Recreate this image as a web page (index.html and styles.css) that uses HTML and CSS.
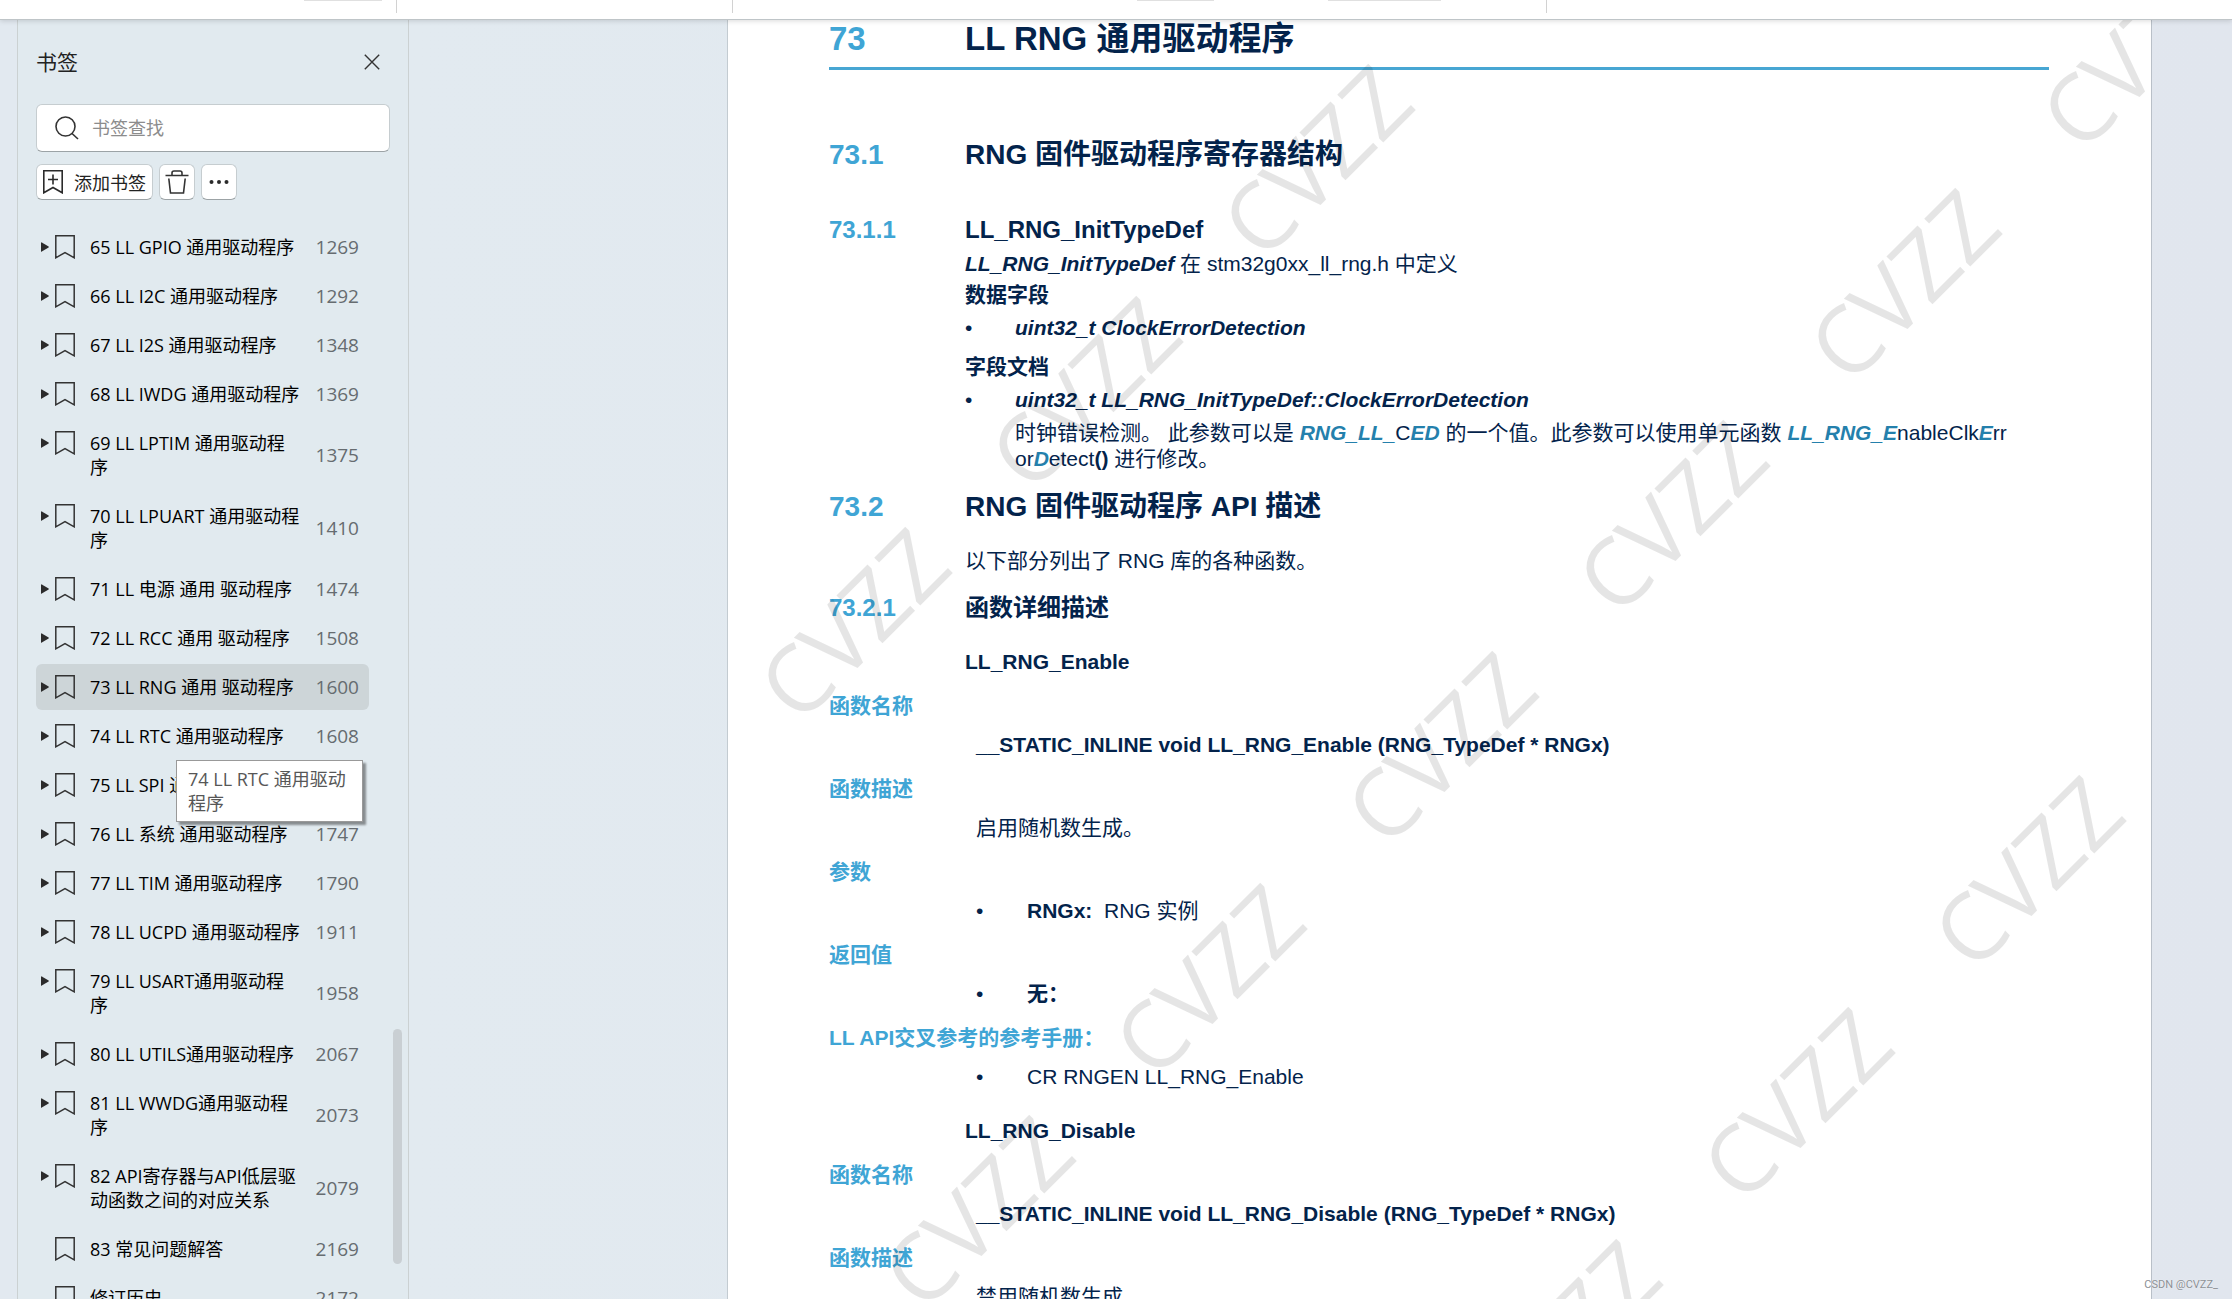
FILE: index.html
```
<!DOCTYPE html>
<html lang="zh-CN">
<head>
    <meta charset="UTF-8">
    <meta name="viewport" content="width=device-width, initial-scale=1.0">
    <title>LL RNG 通用驱动程序</title>
    <link rel="stylesheet" href="styles.css">
</head>
<body>
    <svg class="sprite" aria-hidden="true">
        <symbol id="arrow" viewBox="0 0 8 10"><path d="M0 0.5Q0 0 .8 .4L7.6 4.5Q8 5 7.6 5.5L.8 9.6Q0 10 0 9.5z" fill="#2b2b2b"/></symbol>
        <symbol id="mark" viewBox="0 0 20 24"><path d="M.8.8h18.4v22L10 17.5.8 22.8z" fill="none" stroke="#333" stroke-width="1.5"/></symbol>
    </svg>

    <div class="toolbar">
        <span class="stub stub-a"></span>
        <span class="divider divider-a"></span>
        <span class="divider divider-b"></span>
        <span class="stub stub-b"></span>
        <span class="stub stub-c"></span>
        <span class="divider divider-c"></span>
    </div>

    <div class="workspace">
        <aside class="sidebar">
            <div class="sidebar-head">
                <h2>书签</h2>
                <button class="close" aria-label="关闭">
                    <svg width="16" height="16" viewBox="0 0 16 16"><path d="M.8.8l14.4 14.4M15.2.8L.8 15.2" fill="none" stroke="#333" stroke-width="1.4"/></svg>
                </button>
            </div>
            <label class="search">
                <svg width="24" height="24" viewBox="0 0 24 24"><g fill="none" stroke="#333" stroke-width="1.6"><circle cx="10.500" cy="10.500" r="9.500"/><path d="M17 17.500l6 5.500"/></g></svg>
                <input type="text" placeholder="书签查找" aria-label="书签查找">
            </label>
            <div class="actions">
                <button class="add">
                    <svg width="20" height="24" viewBox="0 0 20 24"><path d="M.8.8h18.400v22L10 17.500.8 22.800zM10 4.500v10M5 9.500h10" fill="none" stroke="#2b2b2b" stroke-width="1.6"/></svg>
                    添加书签
                </button>
                <button class="tool" aria-label="删除">
                    <svg width="24" height="24" viewBox="0 0 24 24"><path d="M.5 5.500h23M7 5.500V3Q7 1 9 1h6q2 0 2 2v2.500M3.800 8.500L5.500 23h13l1.700-14.500" fill="none" stroke="#333" stroke-width="1.6"/></svg>
                </button>
                <button class="tool" aria-label="更多">
                    <svg width="20" height="6" viewBox="0 0 20 6"><g fill="#2b2b2b"><circle cx="2.500" cy="3" r="2"/><circle cx="10" cy="3" r="2"/><circle cx="17.500" cy="3" r="2"/></g></svg>
                </button>
            </div>
            <ul class="bookmarks" id="bookmarks"></ul>
            <div class="scroll-thumb"></div>
            <div class="tooltip" role="tooltip">74 LL RTC 通用驱动<br>程序</div>
        </aside>

        <main class="viewer">
            <article class="page">
                <h1><span>73</span>LL RNG 通用驱动程序</h1>
                <h2><span>73.1</span>RNG 固件驱动程序寄存器结构</h2>
                <h3><span>73.1.1</span>LL_RNG_InitTypeDef</h3>
                <section class="body">
                    <p class="lead"><b><i>LL_RNG_InitTypeDef</i></b> 在 stm32g0xx_ll_rng.h 中定义</p>
                    <h4>数据字段</h4>
                    <ul>
                        <li><b><i>uint32_t ClockErrorDetection</i></b></li>
                    </ul>
                    <h4 class="next">字段文档</h4>
                    <ul>
                        <li>
                            <b><i>uint32_t LL_RNG_InitTypeDef::ClockErrorDetection</i></b>
                            <p class="note">时钟错误检测。 此参数可以是 <em>RNG_LL_</em>C<em>ED</em> 的一个值。此参数可以使用单元函数 <em>LL_RNG_E</em>nableClk<em>E</em>rr<br>or<em>D</em>etect<b>()</b> 进行修改。</p>
                        </li>
                    </ul>
                </section>

                <h2 class="tight"><span>73.2</span>RNG 固件驱动程序 API 描述</h2>
                <section class="body">
                    <p class="intro">以下部分列出了 RNG 库的各种函数。</p>
                </section>
                <h3 class="tight"><span>73.2.1</span>函数详细描述</h3>

                <section class="function">
                    <h4>LL_RNG_Enable</h4>
                    <dl>
                        <dt>函数名称</dt>
                        <dd><b>__STATIC_INLINE void LL_RNG_Enable (RNG_TypeDef * RNGx)</b></dd>
                        <dt>函数描述</dt>
                        <dd>启用随机数生成。</dd>
                        <dt>参数</dt>
                        <dd class="item"><b>RNGx:</b>&nbsp; RNG 实例</dd>
                        <dt>返回值</dt>
                        <dd class="item"><b>无：</b></dd>
                        <dt>LL API交叉参考的参考手册：</dt>
                        <dd class="item">CR RNGEN LL_RNG_Enable</dd>
                    </dl>
                </section>

                <section class="function">
                    <h4>LL_RNG_Disable</h4>
                    <dl>
                        <dt>函数名称</dt>
                        <dd><b>__STATIC_INLINE void LL_RNG_Disable (RNG_TypeDef * RNGx)</b></dd>
                        <dt>函数描述</dt>
                        <dd>禁用随机数生成。</dd>
                    </dl>
                </section>

                <svg class="watermarks" id="watermarks" aria-hidden="true"></svg>
            </article>
        </main>
    </div>
    <div class="credit">CSDN @CVZZ_</div>

    <script>
        const bookmarks = [
            ["65 LL GPIO 通用驱动程序", 1269],
            ["66 LL I2C 通用驱动程序", 1292],
            ["67 LL I2S 通用驱动程序", 1348],
            ["68 LL IWDG 通用驱动程序", 1369],
            ["69 LL LPTIM 通用驱动程<br>序", 1375],
            ["70 LL LPUART 通用驱动程<br>序", 1410],
            ["71 LL 电源 通用 驱动程序", 1474],
            ["72 LL RCC 通用 驱动程序", 1508],
            ["73 LL RNG 通用 驱动程序", 1600],
            ["74 LL RTC 通用驱动程序", 1608],
            ["75 LL SPI 通用驱动程序", 1655],
            ["76 LL 系统 通用驱动程序", 1747],
            ["77 LL TIM 通用驱动程序", 1790],
            ["78 LL UCPD 通用驱动程序", 1911],
            ["79 LL USART通用驱动程<br>序", 1958],
            ["80 LL UTILS通用驱动程序", 2067],
            ["81 LL WWDG通用驱动程<br>序", 2073],
            ["82 API寄存器与API低层驱<br>动函数之间的对应关系", 2079],
            ["83 常见问题解答", 2169, true],
            ["修订历史", 2172, true]
        ];
        const current = 1600;

        document.getElementById('bookmarks').innerHTML = bookmarks.map(([title, page, leaf]) => `
            <li class="${page === current ? 'selected' : ''}">
                <button class="toggle" aria-label="展开">${leaf ? '' : '<svg width="8" height="10"><use href="#arrow"/></svg>'}</button>
                <svg class="mark" width="20" height="24"><use href="#mark"/></svg>
                <a href="#">${title}</a>
                <span class="num">${page}</span>
            </li>`).join('');

        // centres of the diagonal watermarks, in page coordinates
        const marks = [
            [1408, 34], [1176, 266], [944, 498], [713, 729], [481, 961], [250, 1193],
            [589, 142], [357, 374], [126, 605],
            [1300, 853], [1069, 1085], [837, 1317]
        ];
        document.getElementById('watermarks').innerHTML = marks.map(([x, y]) =>
            `<text transform="translate(${x} ${y}) rotate(-45)" y="33">CVZZ</text>`).join('');
    </script>
</body>
</html>
```
FILE: styles.css
```
* {
    box-sizing: border-box;
    margin: 0;
    padding: 0;
}
body {
    height: 100vh;
    display: flex;
    flex-direction: column;
    overflow: hidden;
    background: #e2e9f0;
    font-family: "Open Sans", "Noto Sans CJK SC", sans-serif;
}
button {
    border: none;
    background: none;
    font: inherit;
    cursor: pointer;
}
.sprite {
    position: absolute;
    width: 0;
    height: 0;
}
.toolbar {
    position: relative;
    z-index: 2;
    flex: none;
    display: flex;
    height: 20px;
    background: #fff;
    border-bottom: 1px solid #bfc5c8;
    box-shadow: 0 1px 5px rgba(0, 0, 0, 0.15);
}
.divider {
    width: 1px;
    height: 13px;
    background: #d2d2d2;
}
.stub {
    height: 1px;
    background: #e0e0e0;
}
.stub-a {
    width: 78px;
    margin-left: 304px;
}
.stub-b {
    width: 77px;
    margin-left: 404px;
}
.stub-c {
    width: 113px;
    margin-left: 114px;
}
.divider-a {
    margin-left: 14px;
}
.divider-b {
    margin-left: 335px;
}
.divider-c {
    margin-left: 105px;
}
.workspace {
    flex: 1;
    min-height: 0;
    display: flex;
}

/* bookmarks panel */
.sidebar {
    position: relative;
    flex: none;
    width: 392px;
    margin-left: 17px;
    padding: 24px 18px 0;
    border-left: 1px solid #cbd1d2;
    border-right: 1px solid #cbd1d2;
    background: #e1eaef;
    overflow: hidden;
}
.sidebar-head {
    display: flex;
    align-items: center;
    justify-content: space-between;
    height: 36px;
    padding-right: 10px;
}
.sidebar-head h2 {
    font-size: 21px;
    font-weight: 400;
    line-height: 36px;
    color: #222;
}
.close {
    display: flex;
}
.search {
    display: flex;
    align-items: center;
    gap: 13px;
    height: 48px;
    margin-top: 24px;
    padding: 0 18px;
    background: #fff;
    border: 1px solid #c6cdd0;
    border-bottom-color: #9ca3a6;
    border-radius: 6px;
}
.search input {
    flex: 1;
    min-width: 0;
    border: none;
    outline: none;
    font: inherit;
    font-size: 18px;
}
.search input::placeholder {
    color: #8c8c8c;
}
.actions {
    display: flex;
    gap: 6px;
    margin: 12px 0 24px;
}
.actions button {
    display: flex;
    align-items: center;
    justify-content: center;
    height: 36px;
    background: #fff;
    border: 1px solid #c6cdd0;
    border-bottom-color: #9ca3a6;
    border-radius: 6px;
}
.actions .add {
    gap: 11px;
    width: 117px;
    font-size: 18px;
    color: #222;
}
.actions .tool {
    width: 36px;
}
.bookmarks {
    list-style: none;
    margin-right: 21px;
}
.bookmarks li {
    display: flex;
    align-items: flex-start;
    margin-bottom: 3px;
    padding: 11px 10px 11px 5px;
    border-radius: 6px;
}
.bookmarks .selected {
    background: #cdd5d8;
}
.toggle {
    display: flex;
    align-items: center;
    flex: none;
    width: 8px;
    height: 24px;
    margin-right: 6px;
}
.mark {
    flex: none;
    margin-right: 15px;
}
.bookmarks a {
    flex: 1;
    font-size: 18px;
    line-height: 24px;
    color: #000;
    text-decoration: none;
    white-space: nowrap;
}
.num {
    align-self: center;
    font-size: 19px;
    line-height: 24px;
    color: #666c70;
}
.scroll-thumb {
    position: absolute;
    right: 6px;
    bottom: 35px;
    width: 9px;
    height: 235px;
    border-radius: 5px;
    background: #c9cfd3;
}
.tooltip {
    position: absolute;
    top: 740px;
    left: 158px;
    width: 187px;
    padding: 6px 11px;
    background: #fff;
    border: 1px solid #999;
    box-shadow: 3px 3px 2px rgba(0, 0, 0, 0.4);
    font-size: 18px;
    line-height: 24px;
    color: #575757;
    white-space: nowrap;
}

/* document */
.viewer {
    flex: 1;
    min-width: 0;
    display: flex;
    padding: 0 80px 0 318px;
    background: linear-gradient(90deg, #e2eaf0, #e1e6ee);
}
.page {
    position: relative;
    flex: 1;
    min-width: 0;
    padding: 0 102px 0 101px;
    background: #fff;
    border-left: 1px solid #c3cbd1;
    border-right: 1px solid #b9c0c8;
    overflow: hidden;
    font-family: "Liberation Sans", "Noto Sans CJK SC", sans-serif;
    font-size: 21px;
    line-height: 30px;
    color: #03234b;
    white-space: nowrap;
}
.page h1, .page h2, .page h3 {
    display: flex;
}
.page h1 span, .page h2 span, .page h3 span {
    flex: none;
    width: 136px;
    color: #3fa5d5;
}
.page h1 {
    padding-bottom: 9px;
    border-bottom: 3px solid #47a6d3;
    font-size: 33px;
    line-height: 38px;
}
.page h2 {
    margin-top: 67px;
    font-size: 28px;
    line-height: 36px;
}
.page h3 {
    margin-top: 42px;
    font-size: 24px;
    line-height: 30px;
}
.page h4 {
    font-size: 21px;
    line-height: 30px;
}
.page h2.tight, .page h3.tight {
    margin-top: 17px;
}
.body {
    margin-left: 136px;
}
.lead {
    margin: 4px 0 1px;
}
.body ul {
    list-style: none;
    margin-top: 3px;
}
.body li, .item {
    display: grid;
    grid-template-columns: 50px 1fr;
}
.body li::before, .item::before {
    content: "•";
}
.body .next {
    margin-top: 9px;
}
.note {
    grid-column: 2;
    margin-top: 5px;
    line-height: 26px;
}
.note em {
    font-weight: 700;
    color: #2480ac;
}
.intro {
    margin-top: 21px;
}
.function {
    margin-top: 24px;
}
.function h4 {
    margin-left: 136px;
}
.function dt {
    margin-top: 14px;
    font-weight: 700;
    color: #3fa5d5;
}
.function dd {
    margin: 9px 0 0 147px;
}
.function .item {
    display: flex;
}
.function .item::before {
    flex: none;
    width: 51px;
}
.watermarks {
    position: absolute;
    inset: 0;
    width: 100%;
    height: 100%;
    pointer-events: none;
}
.watermarks text {
    font-family: "Open Sans", sans-serif;
    font-size: 93px;
    text-anchor: middle;
    fill: rgba(0, 0, 0, 0.1);
}
.credit {
    position: absolute;
    right: 14px;
    bottom: 6px;
    z-index: 3;
    font-family: Roboto, sans-serif;
    font-size: 11px;
    line-height: 16px;
    color: #8b8f94;
    text-shadow: 0 0 1px #fff;
}
```
